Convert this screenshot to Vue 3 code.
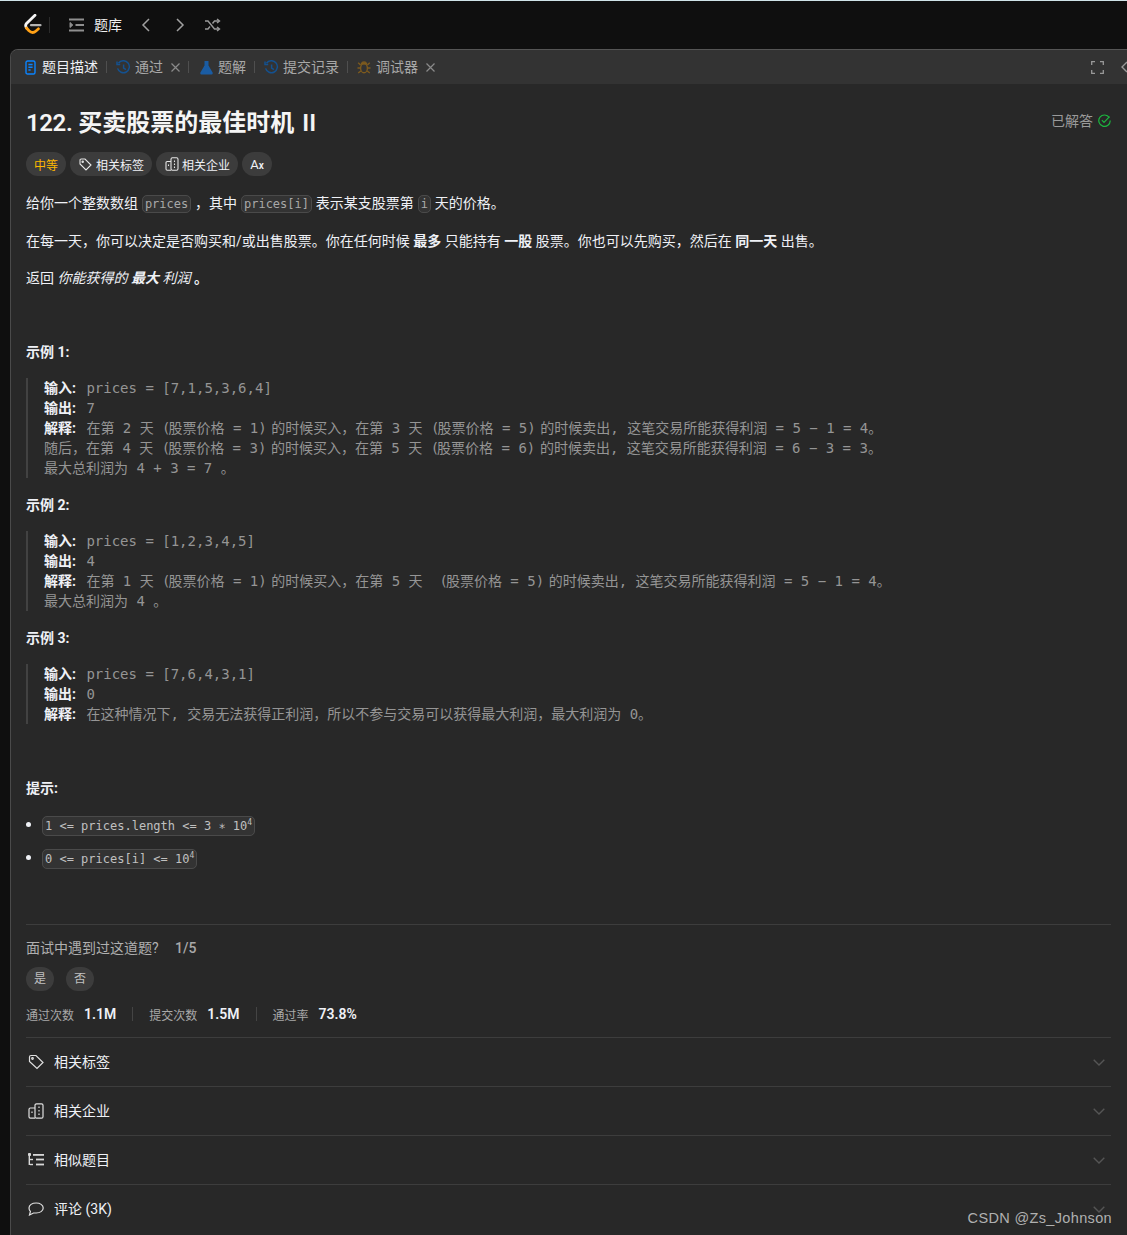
<script setup>
const examples = [
  { title: '示例 1:', input: 'prices = [7,1,5,3,6,4]', output: '7', lines: [
    '在第 2 天 (股票价格 = 1) 的时候买入，在第 3 天 (股票价格 = 5) 的时候卖出, 这笔交易所能获得利润 = 5 − 1 = 4。',
    '随后，在第 4 天 (股票价格 = 3) 的时候买入，在第 5 天 (股票价格 = 6) 的时候卖出, 这笔交易所能获得利润 = 6 − 3 = 3。',
    '最大总利润为 4 + 3 = 7 。' ] },
  { title: '示例 2:', input: 'prices = [1,2,3,4,5]', output: '4', lines: [
    '在第 1 天 (股票价格 = 1) 的时候买入，在第 5 天  (股票价格 = 5) 的时候卖出, 这笔交易所能获得利润 = 5 − 1 = 4。',
    '最大总利润为 4 。' ] },
  { title: '示例 3:', input: 'prices = [7,6,4,3,1]', output: '0', lines: [
    '在这种情况下, 交易无法获得正利润，所以不参与交易可以获得最大利润，最大利润为 0。' ] },
]
const rows = [
  { label: '相关标签', icon: 'tag' },
  { label: '相关企业', icon: 'company' },
  { label: '相似题目', icon: 'similar' },
  { label: '评论 (3K)', icon: 'comment' },
]
const parts = (s) => s.split(/([()])/).filter(Boolean).map((t) => ({
  t,
  cls: t === '(' ? 'po' : t === ')' ? 'pc' : '',
}))
</script>

<template>
  <div class="page">
    <header class="topbar">
      <svg class="logo" width="18" height="22" viewBox="0 0 18 22" fill="none">
        <path d="M11 1.2 L2.5 9.5 Q0.8 11.5 2.5 14" stroke="#f5f5f5" stroke-width="2.8" stroke-linecap="round"/>
        <path d="M2.5 14 L5 16.8 Q8.5 20 12 17 L14.5 14.8" stroke="#ffa116" stroke-width="2.8" stroke-linecap="round"/>
        <path d="M7 11.2 H16.5" stroke="#b3b3b3" stroke-width="2.2" stroke-linecap="round"/>
      </svg>
      <span class="vr"></span>
      <svg class="ic-list" width="15" height="14" viewBox="0 0 15 14" fill="none" stroke="#8f8f8f" stroke-width="1.8">
        <path d="M0 1.5H15M6.5 7H15M0 12.5H15"/><path d="M1 4.5L3.8 7L1 9.5Z" fill="#8f8f8f" stroke-width="1"/>
      </svg>
      <span class="lib">题库</span>
      <svg class="ic-prev" width="10" height="14" viewBox="0 0 10 14" fill="none" stroke="#a0a0a0" stroke-width="1.5"><path d="M8 1L2 7L8 13"/></svg>
      <svg class="ic-next" width="10" height="14" viewBox="0 0 10 14" fill="none" stroke="#a0a0a0" stroke-width="1.5"><path d="M2 1L8 7L2 13"/></svg>
      <svg class="ic-shuffle" width="17" height="14" viewBox="0 0 17 14" fill="none" stroke="#9a9a9a" stroke-width="1.4">
        <path d="M1 3H4L10.5 11H15M1 11H4L6 8.5M8.5 5.5L10.5 3H15"/><path d="M13 1L15.5 3L13 5M13 9L15.5 11L13 13"/>
      </svg>
    </header>

    <section class="panel">
      <nav class="tabs">
        <svg class="t-ic" width="11" height="15" viewBox="0 0 11 15" fill="none" stroke="#0a84ff" stroke-width="1.4"><rect x="1" y="1" width="9" height="13" rx="1.6"/><path d="M3.4 4.5H7.6M3.4 7.3H7.6M3.4 10H5.6"/></svg>
        <span class="tab on">题目描述</span><i class="sep"></i>
        <svg class="t-ic hist1" width="15" height="15" viewBox="0 0 15 15" fill="none" stroke="#14518f" stroke-width="1.5"><path d="M2.5 3.2A6 6 0 1 1 1.6 8.4"/><path d="M1 1.5V4.6H4.2"/><path d="M7.6 4.5V8L10 9.6"/></svg>
        <span class="tab">通过</span><svg class="x" width="9" height="9" viewBox="0 0 9 9" stroke="#8a8a8a" stroke-width="1.2"><path d="M.5.5L8.5 8.5M8.5.5L.5 8.5"/></svg><i class="sep"></i>
        <svg class="t-ic flask" width="13" height="15" viewBox="0 0 13 15"><path d="M4.5 1H8.5V5.5L12.6 12.4Q13.2 14.4 11.4 14.5H1.6Q-.2 14.4.4 12.4L4.5 5.5Z" fill="#1a5ca3"/></svg>
        <span class="tab">题解</span><i class="sep"></i>
        <svg class="t-ic hist2" width="15" height="15" viewBox="0 0 15 15" fill="none" stroke="#14518f" stroke-width="1.5"><path d="M2.5 3.2A6 6 0 1 1 1.6 8.4"/><path d="M1 1.5V4.6H4.2"/><path d="M7.6 4.5V8L10 9.6"/></svg>
        <span class="tab">提交记录</span><i class="sep"></i>
        <svg class="t-ic bug" width="14" height="14" viewBox="0 0 14 14" fill="none" stroke="#7d5a1e" stroke-width="1.4"><ellipse cx="7" cy="8.2" rx="3.4" ry="4.6"/><path d="M4.5 3.8A2.6 2.6 0 0 1 9.5 3.8Z" fill="#7d5a1e"/><path d="M0.5 8H3.6M10.4 8H13.5M1.2 2.8L3.6 5M12.8 2.8L10.4 5M1.2 13L3.8 11M12.8 13L10.2 11"/></svg>
        <span class="tab">调试器</span><svg class="x" width="9" height="9" viewBox="0 0 9 9" stroke="#8a8a8a" stroke-width="1.2"><path d="M.5.5L8.5 8.5M8.5.5L.5 8.5"/></svg>
        <span class="grow"></span>
        <svg width="13" height="13" viewBox="0 0 13 13" fill="none" stroke="#999" stroke-width="1.3"><path d="M.7 4V.7H4M9 .7H12.3V4M12.3 9V12.3H9M4 12.3H.7V9"/></svg>
        <svg class="collapse" width="7" height="12" viewBox="0 0 7 12" fill="none" stroke="#999" stroke-width="1.4"><path d="M6 1L1 6L6 11"/></svg>
      </nav>

      <main class="body">
        <div class="title-row">
          <h1><span class="num">122.</span> 买卖股票的最佳时机 <span class="roman">II</span></h1>
          <span class="solved">已解答
            <svg width="13" height="13" viewBox="0 0 13 13" fill="none" stroke="#1cb73f" stroke-width="1.2"><path d="M11.3 3.6A5.7 5.7 0 1 0 12.2 6.5"/><path d="M3.9 6.2L6 8.3L11.5 2.6"/></svg>
          </span>
        </div>

        <div class="chips">
          <span class="chip med">中等</span>
          <span class="chip">
            <svg width="13" height="13" viewBox="0 0 13 13" fill="none" stroke="#e5e5e5" stroke-width="1.1"><path d="M1 2.2Q1 1 2.2 1H6L12 7L7 12L1 6Z"/><circle cx="3.7" cy="3.7" r=".7"/></svg>
            相关标签
          </span>
          <span class="chip">
            <svg width="14" height="14" viewBox="0 0 14 14" fill="none" stroke="#e5e5e5" stroke-width="1.1"><rect x="6" y=".8" width="7" height="12.4" rx="1.4"/><path d="M6 4.5H2.2Q1 4.5 1 5.7V12Q1 13.2 2.2 13.2H6"/><path d="M9.5 3.5V5M9.5 6.5V8M9.5 9.5V11M3.5 7.5V9"/></svg>
            相关企业
          </span>
          <span class="chip ax">A<small>x</small></span>
        </div>

        <p class="para">给你一个整数数组 <code>prices</code> ，其中 <code>prices[i]</code> 表示某支股票第 <code>i</code> 天的价格。</p>
        <p class="para">在每一天，你可以决定是否购买和/或出售股票。你在任何时候 <b>最多</b> 只能持有 <b>一股</b> 股票。你也可以先购买，然后在 <b>同一天</b> 出售。</p>
        <p class="para">返回 <em>你能获得的 <b>最大</b> 利润</em> <b>。</b></p>

        <div class="examples">
          <template v-for="ex in examples" :key="ex.title">
            <p class="ex-title">{{ ex.title }}</p>
            <blockquote>
              <div><b>输入:</b> {{ ex.input }}</div>
              <div><b>输出:</b> {{ ex.output }}</div>
              <div><b>解释:</b> <span v-for="(p, i) in parts(ex.lines[0])" :key="i" :class="p.cls">{{ p.t }}</span></div>
              <div v-for="l in ex.lines.slice(1)" :key="l"><span v-for="(p, i) in parts(l)" :key="i" :class="p.cls">{{ p.t }}</span></div>
            </blockquote>
          </template>
        </div>

        <p class="hint">提示:</p>
        <ul>
          <li><code class="c2">1 &lt;= prices.length &lt;= 3 ∗ 10<sup>4</sup></code></li>
          <li><code class="c2">0 &lt;= prices[i] &lt;= 10<sup>4</sup></code></li>
        </ul>

        <div class="interview">
          <div class="q">面试中遇到过这道题? <span class="qn">1/5</span></div>
          <div class="yn"><span>是</span><span>否</span></div>
          <div class="stats">
            <span class="s">通过次数</span><b>1.1M</b><i></i>
            <span class="s">提交次数</span><b>1.5M</b><i></i>
            <span class="s">通过率</span><b>73.8%</b>
          </div>
        </div>

        <div class="acc">
          <div v-for="r in rows" :key="r.label" class="acc-row">
            <svg v-if="r.icon === 'tag'" width="16" height="16" viewBox="0 0 16 16" fill="none" stroke="#e0e0e0" stroke-width="1.2"><path d="M1.5 3Q1.5 1.5 3 1.5H8L15 8.5L9 14.5L1.5 7.5Z"/><circle cx="4.5" cy="4.5" r=".8"/></svg>
            <svg v-else-if="r.icon === 'company'" width="16" height="16" viewBox="0 0 16 16" fill="none" stroke="#e0e0e0" stroke-width="1.2"><rect x="7" y=".8" width="8" height="14.4" rx="1.5"/><path d="M7 5H2.4Q1 5 1 6.4V13.8Q1 15.2 2.4 15.2H7"/><path d="M11 3.5V5M11 7V8.5M11 10.5V12M4 8.5V10"/></svg>
            <svg v-else-if="r.icon === 'similar'" width="16" height="14" viewBox="0 0 16 14" fill="#d8d8d8" stroke="none"><rect x="0" y="0" width="3" height="3" rx=".8"/><rect x=".6" y="3" width="1.4" height="9"/><rect x="2" y="5.8" width="3" height="1.4"/><rect x="2" y="10.8" width="3" height="1.4"/><rect x="5" y="1" width="11" height="1.8"/><rect x="8" y="5.6" width="8" height="1.8"/><rect x="8" y="10.6" width="8" height="1.8"/></svg>
            <svg v-else width="16" height="14" viewBox="0 0 16 14" fill="none" stroke="#e0e0e0" stroke-width="1.2"><path d="M8.2 1C12 1 15.2 3 15.2 6C15.2 9 12 11 8.2 11H5.5L1.5 13L2.4 9.5Q1 8 1 6C1 3 4 1 8.2 1Z"/></svg>
            <span class="acc-label">{{ r.label }}</span>
            <svg class="chev" width="12" height="7" viewBox="0 0 12 7" fill="none" stroke="#555" stroke-width="1.4"><path d="M.7.7L6 6L11.3.7"/></svg>
          </div>
        </div>
      </main>
    </section>
    <div class="wm">CSDN @Zs_Johnson</div>
  </div>
</template>

<style>
html, body { margin: 0; height: 1235px; overflow: hidden; background: #0f0f0f; }
</style>

<style scoped>
.page { position: relative; width: 1127px; height: 1235px; overflow: hidden; background: #0f0f0f; border-top: 1px solid #cfe3e8; box-sizing: border-box;
  font-family: Roboto, "Noto Sans CJK SC", sans-serif; font-size: 14px; color: #eff1f6; }
.topbar { height: 48px; display: flex; align-items: center; padding-left: 24px; box-sizing: border-box; }
.logo { margin-right: 7px; }
.vr { width: 1px; height: 16px; background: #2b2b2b; margin-right: 19px; }
.lib { margin: 0 0 2px 10px; font-size: 14px; color: #f0f0f0; }
.ic-prev { margin-left: 19px; }
.ic-next { margin-left: 24px; }
.ic-shuffle { margin-left: 19px; }

.panel { margin-left: 10px; height: 1186px; background: #282828; border-radius: 8px 0 0 0; border-left: 1px solid #4a4a4a; border-top: 1px solid #555; overflow: hidden; }
.tabs { height: 34px; background: #333; display: flex; align-items: center; padding: 0 0 0 14px; }
.t-ic { flex: none; margin-right: 6px; }
.hist1 { margin: 0 4px 0 1px; }
.flask { margin: 0 5px 0 3px; }
.hist2 { margin: 0 4px 0 1px; }
.bug { margin: 0 5px 0 1px; }
.tab { color: #a8a8a8; font-size: 14px; white-space: nowrap; margin-bottom: 2px; }
.tab.on { color: #eff1f6; }
.sep { width: 1px; height: 12px; background: #4f4f4f; margin: 0 8px; }
.x { margin-left: 8px; }
.grow { flex: 1; }
.collapse { margin: 0 -1px 0 17px; }

.body { padding: 0 16px 0 15px; }
.title-row { height: 68px; display: flex; justify-content: space-between; align-items: center; }
h1 { margin: 0; font-size: 24px; line-height: 32px; font-weight: 600; color: #f5f5f5; position: relative; top: 5px; }
.num { letter-spacing: -.4px; }
.roman { margin-left: 2px; }
.solved { color: #9a9a9a; font-size: 14px; display: inline-flex; align-items: center; gap: 5px; position: relative; top: 2px; }

.chips { display: flex; gap: 4px; height: 24px; }
.chip { height: 24px; padding: 0 8px; border-radius: 12px; background: #3c3c3c; color: #eff1f6; font-size: 12px; display: inline-flex; align-items: center; gap: 3px; }
.med { color: #ffb800; }
.chip:nth-child(2), .chip:nth-child(3) { padding: 0 8px 0 9px; gap: 4px; }
.chip:nth-child(3) { gap: 3px; }
.ax { padding: 0 8px; font-size: 13px; width: 14px; justify-content: center; gap: 0; }
.ax small { font-size: 10px; font-weight: 600; margin-top: 2px; }

.para { margin: 12.5px 0 0; line-height: 25px; color: #eff1f6; }
.chips + .para { margin-top: 15px; }
em { font-style: italic; }
b { font-weight: 700; }
code { font-family: "DejaVu Sans Mono", monospace; font-size: 12px; line-height: 18px; margin: 0 .4px; padding: 1px 2px 1px 2px; background: #333; border: 1px solid #4a4a4a; border-radius: 5px; color: #a8a8a8; }

.examples { margin-top: 50px; }
.ex-title { margin: 0; line-height: 22px; font-weight: 700; color: #eff1f6; }
blockquote { margin: 15px 0 16px; padding-left: 16px; border-left: 2px solid #424242; font-family: "DejaVu Sans Mono", "Noto Sans CJK SC", monospace; font-size: 14px; line-height: 20px; color: #959595; white-space: pre-wrap; }
blockquote b { font-family: Roboto, "Noto Sans CJK SC", sans-serif; color: #eff1f6; margin-right: 2px; }
.po { letter-spacing: -2px; }
.pc { letter-spacing: -3.8px; }

.hint { margin: 53px 0 0; line-height: 22px; font-weight: 700; }
ul { margin: 15px 0 0; padding-left: 16px; list-style: none; }
li { position: relative; height: 33px; line-height: 22px; }
li::before { content: ""; position: absolute; left: -16px; top: 8px; width: 5px; height: 5px; border-radius: 50%; background: #eff1f6; }
.c2 { color: #c0c0c0; margin: 0; padding: 2px 2px; }
sup { font-size: 8px; line-height: 0; vertical-align: 5px; }

.interview { margin-top: 44px; border-top: 1px solid #3d3d3d; padding-top: 13px; }
.q { font-size: 14px; line-height: 20px; color: #b0b0b0; }
.qn { margin-left: 13px; font-weight: 500; color: #a8a8a8; }
.yn { display: flex; gap: 12px; margin-top: 9px; }
.yn span { width: 28px; height: 24px; line-height: 24px; border-radius: 12px; background: #3c3c3c; text-align: center; font-size: 12px; color: #c0c0c0; }
.stats { display: flex; align-items: center; margin-top: 12px; height: 22px; font-size: 12px; color: #a8a8a8; }
.stats b { margin-left: 10px; font-size: 14px; font-weight: 600; color: #eff1f6; }
.stats i { width: 1px; height: 14px; background: #444; margin: 0 16px; }

.acc { margin-top: 12px; }
.acc-row { height: 48px; border-top: 1px solid #3d3d3d; display: flex; align-items: center; padding-left: 2px; }
.acc-label { margin: 0 0 2px 10px; font-size: 14px; color: #eff1f6; }
.chev { margin-left: auto; margin-right: 6px; }

.wm { position: absolute; right: 15px; top: 1207px; font-family: "Liberation Sans", sans-serif; font-size: 14.5px; line-height: 20px; letter-spacing: .35px; color: #b0b0b0; }
</style>
